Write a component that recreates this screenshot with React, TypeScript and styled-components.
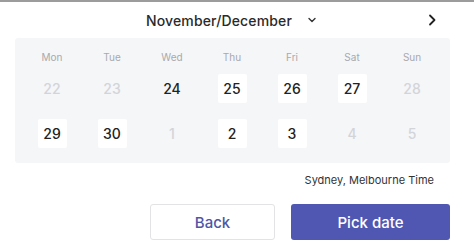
import styled, { createGlobalStyle } from "styled-components";

const GlobalStyle = createGlobalStyle`
  body {
    margin: 0;
    background: #ffffff;
    font-family: Inter, "Noto Sans", sans-serif;
  }
`;

type DayCell = {
  label: string;
  muted?: boolean;
  boxed?: boolean;
};

const dayNames = ["Mon", "Tue", "Wed", "Thu", "Fri", "Sat", "Sun"];

const weeks: DayCell[][] = [
  [
    { label: "22", muted: true },
    { label: "23", muted: true },
    { label: "24" },
    { label: "25", boxed: true },
    { label: "26", boxed: true },
    { label: "27", boxed: true },
    { label: "28", muted: true },
  ],
  [
    { label: "29", boxed: true },
    { label: "30", boxed: true },
    { label: "1", muted: true },
    { label: "2", boxed: true },
    { label: "3", boxed: true },
    { label: "4", muted: true },
    { label: "5", muted: true },
  ],
];

function ChevronDown() {
  return (
    <svg width="10" height="10" viewBox="0 0 10 10" fill="none">
      <path d="M2 3.5 L5 6.5 L8 3.5" stroke="#333" strokeWidth="1.4" strokeLinecap="round" strokeLinejoin="round" />
    </svg>
  );
}

function ChevronRight() {
  return (
    <svg width="12" height="14" viewBox="0 0 12 14" fill="none">
      <path d="M4 2.5 L8.5 7 L4 11.5" stroke="#222" strokeWidth="1.8" strokeLinecap="round" strokeLinejoin="round" />
    </svg>
  );
}

function App() {
  return (
    <>
      <GlobalStyle />
      <Page>
        <TopBar />
        <Header>
          <span />
          <MonthPicker>
            <MonthLabel>November/December</MonthLabel>
            <ChevronDown />
          </MonthPicker>
          <NextButton>
            <ChevronRight />
          </NextButton>
        </Header>

        <CalendarPanel>
          <Grid>
            {dayNames.map((name) => (
              <DayName key={name}>{name}</DayName>
            ))}
          </Grid>
          {weeks.map((week, i) => (
            <WeekRow key={i}>
              {week.map((day) => (
                <Cell key={day.label}>
                  <DayBox boxed={day.boxed} muted={day.muted}>
                    {day.label}
                  </DayBox>
                </Cell>
              ))}
            </WeekRow>
          ))}
        </CalendarPanel>

        <TimeZone>Sydney, Melbourne Time</TimeZone>

        <Actions>
          <BackButton>Back</BackButton>
          <PickButton>Pick date</PickButton>
        </Actions>
      </Page>
    </>
  );
}

const Page = styled.div`
  width: 474px;
  height: 248px;
  box-sizing: border-box;
  padding: 0 24px 0 15px;
  display: flex;
  flex-direction: column;
`;

const TopBar = styled.div`
  height: 2px;
  margin: 0 -24px 0 -15px;
  background: #9c9c9c;
`;

const Header = styled.div`
  height: 36px;
  display: grid;
  grid-template-columns: 1fr auto 1fr;
  align-items: center;
`;

const MonthPicker = styled.div`
  display: flex;
  align-items: center;
  gap: 15px;
  padding-right: 2px;
`;

const MonthLabel = styled.span`
  font-size: 14px;
  font-weight: 500;
  color: #2a2a2a;
  letter-spacing: 0.15px;
`;

const NextButton = styled.div`
  justify-self: end;
  display: flex;
  align-items: center;
  padding-right: 12px;
`;

const CalendarPanel = styled.div`
  background: #f5f6f8;
  border-radius: 3px;
  padding: 12px 8px 15px 7px;
  display: flex;
  flex-direction: column;
`;

const Grid = styled.div`
  display: grid;
  grid-template-columns: repeat(7, 60px);
  height: 14px;
  align-items: center;
`;

const WeekRow = styled(Grid)`
  height: 29px;
  margin-top: 10px;

  & + & {
    margin-top: 16px;
  }
`;

const DayName = styled.span`
  text-align: center;
  font-size: 10px;
  color: #a9a9ad;
`;

const Cell = styled.div`
  display: flex;
  justify-content: center;
`;

const DayBox = styled.div<{ boxed?: boolean; muted?: boolean }>`
  width: 29px;
  height: 29px;
  display: flex;
  align-items: center;
  justify-content: center;
  border-radius: 2px;
  font-size: 14px;
  font-weight: 500;
  background: ${(props) => (props.boxed ? "#ffffff" : "transparent")};
  color: ${(props) => (props.muted ? "#d3d4d8" : "#222222")};
`;

const TimeZone = styled.div`
  margin-top: 10px;
  padding-right: 16px;
  height: 14px;
  line-height: 14px;
  text-align: right;
  font-size: 11px;
  color: #333333;
`;

const Actions = styled.div`
  margin-top: 17px;
  display: flex;
  justify-content: flex-end;
  gap: 16px;
`;

const ButtonBase = styled.button`
  height: 36px;
  box-sizing: border-box;
  border-radius: 3px;
  font-family: Inter, "Noto Sans", sans-serif;
  font-size: 15px;
  font-weight: 500;
  cursor: pointer;
`;

const BackButton = styled(ButtonBase)`
  width: 125px;
  background: #ffffff;
  border: 1px solid #e3e3e6;
  color: #4f56a8;
`;

const PickButton = styled(ButtonBase)`
  width: 159px;
  background: #4f57b3;
  border: none;
  color: #ffffff;
`;

export default App;
